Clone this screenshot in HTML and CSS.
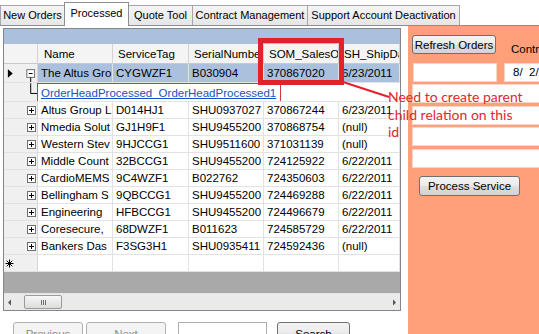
FILE: index.html
```html
<!DOCTYPE html>
<html>
<head>
<meta charset="utf-8">
<link rel="stylesheet" href="styles.css">
</head>
<body>
<div class="app">
  <div class="tabs">
    <div class="tab w-new">New Orders</div>
    <div class="tab active w-proc">Processed</div>
    <div class="tab w-quote">Quote Tool</div>
    <div class="tab w-contract">Contract Management</div>
    <div class="tab w-support">Support Account Deactivation</div>
  </div>
  <div class="page">
    <div class="left">
      <div class="grid">
        <div class="caption"></div>
        <div class="row head">
          <div class="rh"></div>
          <div class="c hname">Name</div>
          <div class="c">ServiceTag</div>
          <div class="c">SerialNumbe</div>
          <div class="c">SOM_SalesO</div>
          <div class="c">SH_ShipDa</div>
        </div>
        <div class="row tall sel">
          <div class="rh">
            <svg width="34" height="19" viewBox="0 0 34 19"><path d="M4 5L9 9.5L4 14Z" fill="#000"/><rect x="23.5" y="5.5" width="8" height="8" fill="#fff" stroke="#6f6f6f"/><path d="M25.5 9.5h4" stroke="#000"/><path d="M27.5 13.5V19" stroke="#000"/></svg>
          </div>
          <div class="c">The Altus Gro</div>
          <div class="c">CYGWZF1</div>
          <div class="c">B030904</div>
          <div class="c">370867020</div>
          <div class="c">6/23/2011</div>
        </div>
        <div class="row tall child">
          <div class="rh">
            <svg width="34" height="19" viewBox="0 0 34 19"><path d="M27.5 0V10.5H34" stroke="#000" fill="none"/></svg>
          </div>
          <div class="cspan"><span class="linkbox"><span class="link">OrderHeadProcessed_OrderHeadProcessed1</span></span></div>
        </div>
        <div class="row">
          <div class="rh"><svg class="plus" width="9" height="9" viewBox="0 0 9 9"><rect x=".5" y=".5" width="8" height="8" fill="#fff" stroke="#6f6f6f"/><path d="M2 4.5h5M4.5 2v5" stroke="#000"/></svg></div>
          <div class="c">Altus Group L</div><div class="c">D014HJ1</div><div class="c">SHU0937027</div><div class="c">370867244</div><div class="c">6/23/2011</div>
        </div>
        <div class="row">
          <div class="rh"><svg class="plus" width="9" height="9" viewBox="0 0 9 9"><rect x=".5" y=".5" width="8" height="8" fill="#fff" stroke="#6f6f6f"/><path d="M2 4.5h5M4.5 2v5" stroke="#000"/></svg></div>
          <div class="c">Nmedia Solut</div><div class="c">GJ1H9F1</div><div class="c">SHU9455200</div><div class="c">370868754</div><div class="c">(null)</div>
        </div>
        <div class="row">
          <div class="rh"><svg class="plus" width="9" height="9" viewBox="0 0 9 9"><rect x=".5" y=".5" width="8" height="8" fill="#fff" stroke="#6f6f6f"/><path d="M2 4.5h5M4.5 2v5" stroke="#000"/></svg></div>
          <div class="c">Western Stev</div><div class="c">9HJCCG1</div><div class="c">SHU9511600</div><div class="c">371031139</div><div class="c">(null)</div>
        </div>
        <div class="row">
          <div class="rh"><svg class="plus" width="9" height="9" viewBox="0 0 9 9"><rect x=".5" y=".5" width="8" height="8" fill="#fff" stroke="#6f6f6f"/><path d="M2 4.5h5M4.5 2v5" stroke="#000"/></svg></div>
          <div class="c">Middle Count</div><div class="c">32BCCG1</div><div class="c">SHU9455200</div><div class="c">724125922</div><div class="c">6/22/2011</div>
        </div>
        <div class="row">
          <div class="rh"><svg class="plus" width="9" height="9" viewBox="0 0 9 9"><rect x=".5" y=".5" width="8" height="8" fill="#fff" stroke="#6f6f6f"/><path d="M2 4.5h5M4.5 2v5" stroke="#000"/></svg></div>
          <div class="c">CardioMEMS</div><div class="c">9C4WZF1</div><div class="c">B022762</div><div class="c">724350603</div><div class="c">6/22/2011</div>
        </div>
        <div class="row">
          <div class="rh"><svg class="plus" width="9" height="9" viewBox="0 0 9 9"><rect x=".5" y=".5" width="8" height="8" fill="#fff" stroke="#6f6f6f"/><path d="M2 4.5h5M4.5 2v5" stroke="#000"/></svg></div>
          <div class="c">Bellingham S</div><div class="c">9QBCCG1</div><div class="c">SHU9455200</div><div class="c">724469288</div><div class="c">6/22/2011</div>
        </div>
        <div class="row">
          <div class="rh"><svg class="plus" width="9" height="9" viewBox="0 0 9 9"><rect x=".5" y=".5" width="8" height="8" fill="#fff" stroke="#6f6f6f"/><path d="M2 4.5h5M4.5 2v5" stroke="#000"/></svg></div>
          <div class="c">Engineering</div><div class="c">HFBCCG1</div><div class="c">SHU9455200</div><div class="c">724496679</div><div class="c">6/22/2011</div>
        </div>
        <div class="row">
          <div class="rh"><svg class="plus" width="9" height="9" viewBox="0 0 9 9"><rect x=".5" y=".5" width="8" height="8" fill="#fff" stroke="#6f6f6f"/><path d="M2 4.5h5M4.5 2v5" stroke="#000"/></svg></div>
          <div class="c">Coresecure,</div><div class="c">68DWZF1</div><div class="c">B011623</div><div class="c">724585729</div><div class="c">6/22/2011</div>
        </div>
        <div class="row">
          <div class="rh"><svg class="plus" width="9" height="9" viewBox="0 0 9 9"><rect x=".5" y=".5" width="8" height="8" fill="#fff" stroke="#6f6f6f"/><path d="M2 4.5h5M4.5 2v5" stroke="#000"/></svg></div>
          <div class="c">Bankers Das</div><div class="c">F3SG3H1</div><div class="c">SHU0935411</div><div class="c">724592436</div><div class="c">(null)</div>
        </div>
        <div class="row newrow">
          <div class="rh"><svg class="star" width="9" height="9" viewBox="0 0 9 9"><path d="M4.5 0.5v8M0.5 4.5h8M1.7 1.7l5.6 5.6M7.3 1.7l-5.6 5.6" stroke="#000" fill="none"/></svg></div>
          <div class="c"></div><div class="c"></div><div class="c"></div><div class="c"></div><div class="c"></div>
        </div>
        <div class="empty"></div>
        <div class="hscroll">
          <svg class="arrow" width="5" height="7" viewBox="0 0 5 7"><path d="M4 0.5L1 3.5L4 6.5Z" fill="#555"/></svg>
          <div class="thumb"><span class="grip"></span><span class="grip"></span><span class="grip"></span></div>
          <div class="track"></div>
          <svg class="arrow" width="5" height="7" viewBox="0 0 5 7"><path d="M1 0.5L4 3.5L1 6.5Z" fill="#555"/></svg>
        </div>
      </div>
      <div class="bottom">
        <div class="btn disabled b-prev">Previous</div>
        <div class="btn disabled b-next">Next</div>
        <div class="textbox b-search-box"></div>
        <div class="btn b-search">Search</div>
      </div>
    </div>
    <div class="side">
      <div class="side-row1">
        <div class="btn b-refresh">Refresh Orders</div>
        <div class="label">Contract</div>
      </div>
      <div class="side-row2">
        <div class="textbox tb-short"></div>
        <div class="textbox tb-date">8/&nbsp; 2/2011</div>
      </div>
      <div class="textbox tb-wide"></div>
      <div class="textbox tb-wide"></div>
      <div class="textbox tb-wide"></div>
      <div class="textbox tb-wide"></div>
      <div class="btn b-process">Process Service</div>
    </div>
  </div>

  <div class="annot-box"></div>
  <svg class="annot-line" width="60" height="24" viewBox="0 0 60 24"><path d="M1 2L47 17" stroke="#e3212b" stroke-width="2"/></svg>
  <div class="annot-text">Need to create parent<br>child relation on this<br>id</div>
</div>
</body>
</html>
```

FILE: styles.css
```css
* { box-sizing: border-box; }

body {
  margin: 0;
  background: #ffffff;
  font-family: "Liberation Sans", Arial, sans-serif;
  font-size: 11.5px;
  color: #000;
}

.app {
  position: relative;
  width: 539px;
  height: 334px;
  overflow: hidden;
}

/* ---------- tabs ---------- */
.tabs {
  display: flex;
  align-items: flex-end;
  height: 26px;
  border-bottom: 1px solid #8c8e94;
}
.tab {
  height: 20px;
  margin-right: -1px;
  border: 1px solid #a4a7ad;
  border-bottom: none;
  background: linear-gradient(#f5f5f5, #e6e6e6);
  font-size: 11px;
  line-height: 19px;
  text-align: center;
  white-space: nowrap;
  overflow: hidden;
  color: #000;
}
.tab.active {
  height: 24px;
  margin-bottom: -1px;
  background: #fff;
  border-color: #8c8e94;
  line-height: 20px;
  position: relative;
  z-index: 1;
}
.w-new { width: 65px; }
.w-proc { width: 65px; }
.w-quote { width: 65px; }
.w-contract { width: 116px; }
.w-support { width: 153px; }

/* ---------- page ---------- */
.page {
  display: flex;
  height: 308px;
}
.left {
  width: 408px;
  flex: none;
  padding: 2px 0 0 3px;
}

/* ---------- grid ---------- */
.grid {
  width: 398px;
  height: 283px;
  border: 1px solid #82868d;
  display: flex;
  flex-direction: column;
  overflow: hidden;
  background: #fff;
}
.caption {
  height: 15px;
  flex: none;
  background: #abc0dc;
}
.row {
  display: grid;
  grid-template-columns: 34px 75px 76px 75px 75px 61px;
  height: 17px;
  flex: none;
}
.row.tall { height: 19px; }
.row.head { height: 20px; }

.c, .rh, .cspan {
  border-right: 1px solid #e2e2e2;
  border-bottom: 1px solid #e2e2e2;
  overflow: hidden;
  white-space: nowrap;
  padding-left: 3px;
  display: flex;
  align-items: center;
}
.rh {
  background: #f0f0f0;
  padding-left: 0;
  border-right-color: #d6d6d6;
}
.rh .plus { margin-left: 23px; }
.rh .star { margin-left: 1px; }

.row.head .c, .row.head .rh {
  background: #f4f4f4;
  border-right: 1px solid #d3d3d3;
  border-bottom: 1px solid #c9c9c9;
  padding-left: 5px;
}
.row.head .rh { padding-left: 0; }
.row.head .hname { padding-left: 6px; }

.row.sel .c { background: #abc0dc; }

.cspan {
  grid-column: 2 / 7;
  padding-left: 0;
  margin-left: -1px;
  align-items: stretch;
  border-right: none;
}
.linkbox {
  display: flex;
  align-items: center;
  width: 244px;
  height: 19px;
  border: 1px solid #d0393d;
  padding-left: 3px;
  background: #fff;
}
.link {
  color: #1552c5;
  text-decoration: underline;
}

.empty {
  flex: 1;
  background: #a9a9a9;
}
.hscroll {
  height: 17px;
  flex: none;
  display: flex;
  align-items: center;
  background: #eaeaea;
  border-top: 1px solid #e4e4e4;
  padding: 0 3px;
}
.hscroll .arrow { flex: none; }
.thumb {
  width: 38px;
  height: 14px;
  margin-left: 12px;
  border: 1px solid #9b9b9b;
  border-radius: 2px;
  background: linear-gradient(#f7f7f7, #dcdcdc);
  display: flex;
  align-items: center;
  justify-content: center;
  gap: 1px;
}
.grip {
  width: 1px;
  height: 5px;
  background: #6d6d6d;
}
.track { flex: 1; }

/* ---------- buttons / inputs ---------- */
.btn {
  height: 20px;
  border: 1px solid #707070;
  border-radius: 3px;
  background: linear-gradient(#f3f3f3 0%, #ececec 45%, #dddddd 55%, #d3d3d3 100%);
  display: flex;
  align-items: center;
  justify-content: center;
  white-space: nowrap;
  font-size: 11.5px;
}
.btn.disabled {
  color: #8b8b8b;
  border-color: #adb2b5;
  background: #f4f4f4;
}
.textbox {
  height: 19px;
  background: #fff;
  border: 1px solid #f6d6c8;
  white-space: nowrap;
  overflow: hidden;
}

.bottom {
  display: flex;
  align-items: flex-start;
  margin-top: 11px;
  padding-left: 10px;
}
.b-prev { width: 70px; height: 23px; }
.b-next { width: 80px; height: 23px; margin-left: 3px; }
.b-search-box { width: 89px; height: 23px; margin-left: 12px; border-color: #abadb3; }
.b-search { width: 73px; height: 23px; margin-left: 10px; }

/* ---------- side panel ---------- */
.side {
  flex: 1;
  background: #ffa07a;
  padding: 9px 0 0 4px;
  display: flex;
  flex-direction: column;
  overflow: hidden;
}
.side-row1 {
  display: flex;
  align-items: flex-end;
  gap: 15px;
  height: 19px;
}
.b-refresh { width: 84px; height: 19px; flex: none; }
.label {
  white-space: nowrap;
  font-size: 11.5px;
  line-height: 13px;
  margin-bottom: -2px;
}
.side-row2 {
  display: flex;
  gap: 7px;
  margin-top: 9px;
  margin-left: 1px;
}
.tb-short { width: 84px; flex: none; }
.tb-date {
  width: 70px;
  flex: none;
  padding-left: 8px;
  line-height: 17px;
}
.tb-wide {
  width: 140px;
  flex: none;
  margin-top: 2.5px;
  height: 19px;
}
.side-row2 + .tb-wide { margin-top: 2px; }
.b-process {
  width: 101px;
  height: 20px;
  margin-top: 8px;
  margin-left: 7px;
}

/* ---------- annotation overlay ---------- */
.annot-box {
  position: absolute;
  left: 258px;
  top: 38px;
  width: 86px;
  height: 47px;
  border: 5px solid #e3212b;
}
.annot-line {
  position: absolute;
  left: 342px;
  top: 80px;
}
.annot-text {
  position: absolute;
  left: 388px;
  top: 88px;
  font-family: Lato, "Open Sans", sans-serif;
  font-size: 14px;
  line-height: 17.5px;
  color: #e2262f;
  white-space: nowrap;
}
```
